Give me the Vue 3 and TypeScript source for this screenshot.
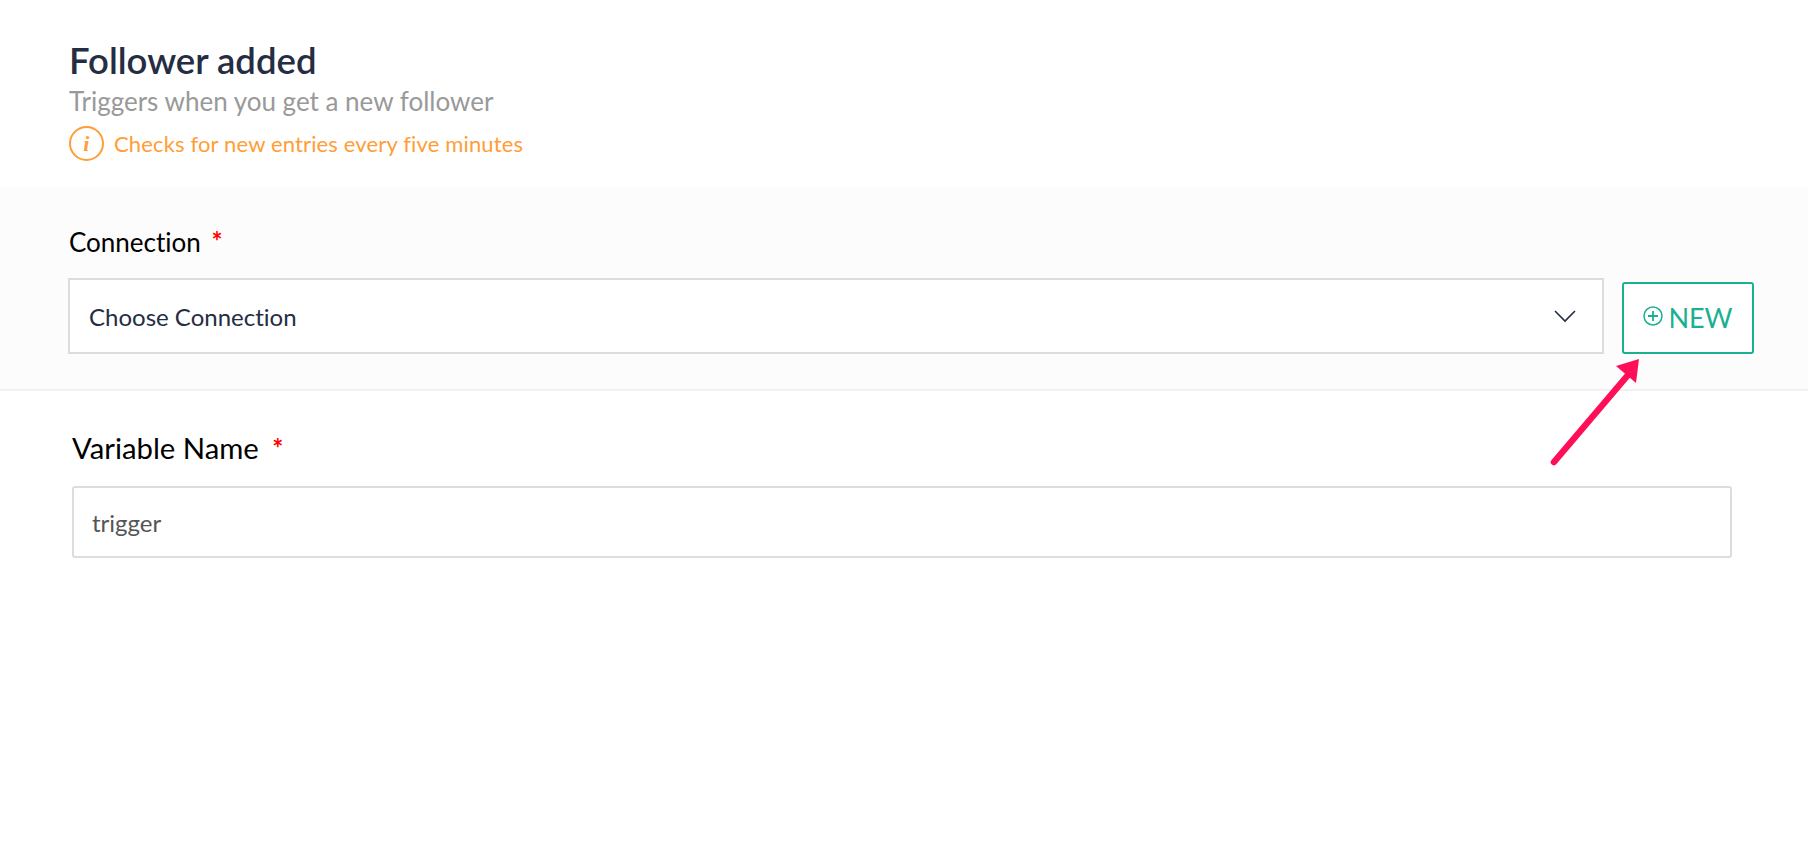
<script setup lang="ts">
const title = 'Follower added'
</script>

<template>
  <div class="page">
    <header class="head">
      <h1 class="title">{{ title }}</h1>
      <p class="sub">Triggers when you get a new follower</p>
      <div class="note">
        <span class="info"><i>i</i></span>
        <span>Checks for new entries every five minutes</span>
      </div>
    </header>

    <section class="conn">
      <div class="label">Connection <span class="req">*</span></div>
      <div class="row">
        <div class="select">
          <span>Choose Connection</span>
          <svg width="24" height="14" viewBox="0 0 24 14" fill="none" stroke="#252d43" stroke-width="1.6">
            <path d="M2 2l10 10L22 2" />
          </svg>
        </div>
        <button class="new">
          <svg width="20" height="20" viewBox="0 0 20 20" fill="none" stroke="#1bb092" stroke-width="1.5">
            <circle cx="10" cy="10" r="9" />
            <path d="M10 5v10M5 10h10" stroke-width="1.8" />
          </svg>
          <span class="new-text">NEW</span>
        </button>
      </div>
      <svg class="arrow" width="100" height="135" viewBox="0 0 100 135">
        <path d="M6 127L80 40" stroke="#ff0f57" stroke-width="6.5" stroke-linecap="round" fill="none" />
        <path d="M91 24L68 31L88 48Z" fill="#ff0f57" />
      </svg>
    </section>

    <section class="var">
      <div class="label var-label">Variable Name <span class="req">*</span></div>
      <div class="input">trigger</div>
    </section>
  </div>
</template>

<style>
html, body { background: #fff; }
</style>

<style scoped>
.page {
  width: 1808px;
  height: 856px;
  overflow: hidden;
  background: #fff;
  font-family: Lato, "Liberation Sans", sans-serif;
  font-variant-ligatures: none;
}
.head { padding: 37px 69px 0; height: 187px; box-sizing: border-box; }
.title { margin: 0; font-size: 36.5px; line-height: 47px; font-weight: 600; color: #252d43; }
.sub { margin: 0; font-size: 26px; line-height: 34px; color: #999; }
.note { margin-top: 8px; display: flex; align-items: center; gap: 10px; font-size: 22px; line-height: 35px; color: #ff9d36; letter-spacing: 0.15px; }
.info {
  width: 35px; height: 35px; box-sizing: border-box; border: 2px solid #ff9d36; border-radius: 50%;
  display: flex; align-items: center; justify-content: center;
  font-family: "Liberation Serif", serif; font-size: 22px; font-weight: 700;
}
.conn {
  position: relative;
  height: 204px; box-sizing: border-box;
  background: #fcfcfc;
  border-bottom: 2px solid #f0f0f0;
  padding: 39px 54px 0 68px;
}
.label { font-size: 26px; line-height: 32px; color: #000; padding-left: 1px; }
.req { color: #f00; margin-left: 4px; font-size: 26px; font-weight: 700; position: relative; top: -1px; }
.row { display: flex; align-items: flex-end; gap: 18px; margin-top: 20px; }
.select {
  flex: 1; height: 76px; box-sizing: border-box; background: #fff; border: 2px solid #ddd;
  display: flex; align-items: center; justify-content: space-between;
  padding: 0 25px 0 19px; font-size: 24px; color: #252d43;
}
.new {
  width: 132px; height: 72px; box-sizing: border-box; background: #fff;
  border: 2px solid #1bb092; border-radius: 3px; padding: 0;
  display: flex; align-items: center; justify-content: center; gap: 5px;
  font-family: inherit; font-size: 27px; color: #1bb092;
}
.new svg { margin-top: -4px; }
.new-text { margin-top: -2px; }
.arrow { position: absolute; left: 1548px; top: 148px; }
.var { padding: 38px 76px 0 72px; }
.var-label { font-size: 29.3px; line-height: 38px; padding-left: 0; }
.var-label .req { margin-left: 6px; }
.input {
  margin-top: 18px;
  height: 72px; box-sizing: border-box; border: 2px solid #ddd; border-radius: 3px;
  display: flex; align-items: center; padding-left: 18px; font-size: 24px; color: #555; background: #fff;
}
</style>
